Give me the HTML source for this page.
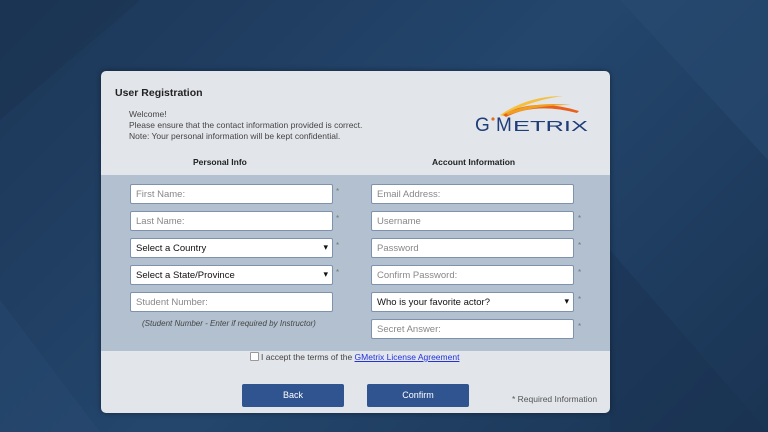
<!DOCTYPE html>
<html><head><style>
body{margin:0;width:768px;height:432px;overflow:hidden;font-family:"Liberation Sans",sans-serif;background:linear-gradient(135deg,#1c3656 0%,#24466d 50%,#1a3453 100%);position:relative}
.bg{position:absolute;inset:0}
.card{position:absolute;left:101px;top:71px;width:509px;height:342px;background:#e2e5ea;border-radius:5px;overflow:hidden;box-shadow:0 0 6px rgba(0,0,0,.4)}
.t{position:absolute;font-size:10px;color:#222}
.band{position:absolute;left:0;top:104px;width:509px;height:176px;background:#b2c0cf}
.in{position:absolute;height:20px;width:203px;background:#fff;border:1px solid #7f92ad;border-radius:2px;box-sizing:border-box;font-size:9.5px;color:#888;padding:4px 5px;font-family:"Liberation Sans",sans-serif}
.sel{color:#111}
.sel:after{content:"▾";position:absolute;right:4px;top:3px;font-size:9px;color:#111}
.st{position:absolute;font-size:8px;color:#777}
.btn{position:absolute;top:313px;width:102px;height:23px;background:#2f5490;color:#fff;font-size:9px;text-align:center;line-height:23px;border-radius:2px}
</style></head><body>
<svg class="bg" width="768" height="432"><polygon points="0,0 140,0 0,120" fill="#1a3250" opacity=".5"/><polygon points="620,0 768,0 768,160" fill="#2a4b72" opacity=".5"/><polygon points="610,250 768,432 610,432" fill="#1a3252" opacity=".5"/><polygon points="0,300 100,432 0,432" fill="#2a4b72" opacity=".4"/></svg>
<div class="card">
<div class="t" style="left:14px;top:16px;font-weight:bold;font-size:10.5px">User Registration</div>
<div class="t" style="left:28px;top:38px;font-size:8.5px;line-height:11px;color:#444">Welcome!<br>Please ensure that the contact information provided is correct.<br>Note: Your personal information will be kept confidential.</div>
<svg style="position:absolute;left:372px;top:22px" width="120" height="44">
<path d="M27 22 Q55 3 90 3 Q58 7 30 23Z" fill="#f5c040"/>
<path d="M30 22 Q60 4 106 18 L104 20 Q62 9 33 24Z" fill="#e8601c"/>
<path d="M33 20 Q62 8 98 12 Q64 12 35 22Z" fill="#f0a020"/>
<text x="2" y="38" font-family="Liberation Sans" font-size="19" fill="#1f3d78">G</text><circle cx="20" cy="26" r="1.6" fill="#e07020"/>
<text x="23" y="38" font-family="Liberation Sans" font-size="19" fill="#1f3d78">M</text>
<text x="40" y="38" font-family="Liberation Sans" font-size="15" fill="#1f3d78" textLength="75" lengthAdjust="spacingAndGlyphs">ETRIX</text></svg>
<div class="t" style="left:92px;top:86px;font-weight:bold;font-size:8.5px">Personal Info</div>
<div class="t" style="left:331px;top:86px;font-weight:bold;font-size:8.5px">Account Information</div>
<div class="band"></div>
<div class="in" style="left:29px;top:113px">First Name:</div>
<div class="in" style="left:29px;top:140px">Last Name:</div>
<div class="in sel" style="left:29px;top:167px">Select a Country</div>
<div class="in sel" style="left:29px;top:194px">Select a State/Province</div>
<div class="in" style="left:29px;top:221px">Student Number:</div>
<div class="t" style="left:41px;top:248px;font-size:8px;font-style:italic;color:#444">(Student Number - Enter if required by Instructor)</div>
<div class="in" style="left:270px;top:113px">Email Address:</div>
<div class="in" style="left:270px;top:140px">Username</div>
<div class="in" style="left:270px;top:167px">Password</div>
<div class="in" style="left:270px;top:194px">Confirm Password:</div>
<div class="in sel" style="left:270px;top:221px">Who is your favorite actor?</div>
<div class="in" style="left:270px;top:248px">Secret Answer:</div>
<div class="st" style="left:235px;top:116px">*</div><div class="st" style="left:235px;top:143px">*</div><div class="st" style="left:235px;top:170px">*</div><div class="st" style="left:235px;top:197px">*</div>
<div class="st" style="left:477px;top:143px">*</div><div class="st" style="left:477px;top:170px">*</div><div class="st" style="left:477px;top:197px">*</div><div class="st" style="left:477px;top:224px">*</div><div class="st" style="left:477px;top:251px">*</div>
<div style="position:absolute;left:149px;top:281px;width:7px;height:7px;border:1px solid #999;background:#fff;border-radius:1px"></div>
<div class="t" style="left:160px;top:281px;font-size:8.5px;color:#444">I accept the terms of the <span style="color:#2233dd;text-decoration:underline">GMetrix License Agreement</span></div>
<div class="btn" style="left:141px">Back</div>
<div class="btn" style="left:266px">Confirm</div>
<div class="t" style="left:411px;top:323px;font-size:8.5px;color:#555">* Required Information</div>
</div>
</body></html>
